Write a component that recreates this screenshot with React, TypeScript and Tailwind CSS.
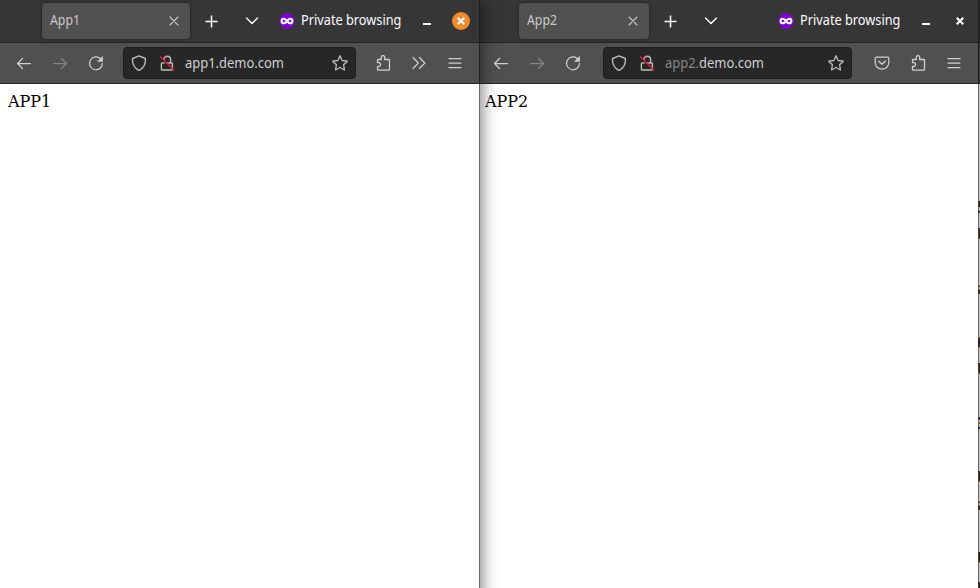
import type { ReactNode } from 'react'
import clsx from 'clsx'

interface BrowserWindow {
  title: string
  subdomain: string
  body: string
  active: boolean
}

const EDGE_TEXT = [
  { top: 197, char: '5' },
  { top: 224, char: 'U' },
  { top: 278, char: 'a' },
  { top: 332, char: '6' },
  { top: 359, char: 'U' },
  { top: 413, char: '3' },
  { top: 467, char: 'U' },
  { top: 494, char: 'a' },
  { top: 548, char: 'U' },
  { top: 575, char: 'r' },
]

function Icon({ children, className }: { children: ReactNode; className?: string }) {
  return (
    <svg width="16" height="16" viewBox="0 0 16 16" fill="none" stroke="currentColor" strokeWidth="1.25"
      strokeLinecap="round" strokeLinejoin="round" className={clsx('block shrink-0', className)}>
      {children}
    </svg>
  )
}

const BackIcon = () => <Icon><path d="M14.5 8.5H1.5M6.5 3.5l-5 5 5 5" /></Icon>
const ForwardIcon = () => <Icon className="text-[#858585]"><path d="M1.5 8.5h13M9.5 3.5l5 5-5 5" /></Icon>

const ReloadIcon = () => (
  <Icon>
    <path d="M12.7 4A6.4 6.4 0 1 0 14.4 8.5" />
    <path d="M14.6 1.6v4.8H9.8z" fill="currentColor" strokeWidth="0.6" />
  </Icon>
)

const ShieldIcon = () => (
  <Icon><path d="M8 .9 14.4 3.5c.5 5.4-1.5 9.5-6.4 12C3.1 13 1.1 8.9 1.6 3.5z" strokeWidth="1.4" /></Icon>
)

const LockIcon = () => (
  <Icon>
    <path d="M5 4.5a3.3 3.3 0 0 1 6.6 0V8M5 8H3.2a.8.8 0 0 0-.8.8v5.4c0 .5.3.8.8.8h9.4c.5 0 .8-.3.8-.8V8.8a.8.8 0 0 0-.8-.8H7.5" strokeWidth="1.4" />
    <path d="M1.5 1.8 14.5 14.8" stroke="#e5194b" strokeWidth="1.4" />
  </Icon>
)

const StarIcon = () => (
  <Icon><path d="m8 .8 2.2 4.7 5.1.7-3.7 3.6.9 5.2L8 12.5 3.5 15l.9-5.2L.7 6.2l5.1-.7z" strokeWidth="1.3" /></Icon>
)

const PuzzleIcon = () => (
  <Icon>
    <path d="M2.5 7.2V5.3c0-.5.3-.8.8-.8h3V2.3a1.7 1.7 0 0 1 3.4 0v2.2h4c.5 0 .8.3.8.8v9.2c0 .4-.3.7-.7.7H3.2a.7.7 0 0 1-.7-.7v-3h1.700a2 2 0 0 0 0-3.800H2.500z" strokeWidth="1.3" />
  </Icon>
)

const PocketIcon = () => (
  <Icon>
    <path d="M2.4 2.2h11.2c.7 0 1.2.5 1.2 1.2v4c0 3.9-2.9 6.7-6.8 6.7S1.2 11.3 1.2 7.4v-4c0-.7.5-1.2 1.2-1.2z" />
    <path d="M4.7 6.2 8 9.3l3.3-3.1" strokeWidth="1.4" />
  </Icon>
)

const OverflowIcon = () => <Icon><path d="m2 2.5 5.3 5.5L2 13.5M8.5 2.5 13.8 8l-5.3 5.5" /></Icon>
const MenuIcon = () => <Icon><path d="M2 3.5h12M2 8h12M2 12.5h12" /></Icon>

function PrivateMask() {
  return (
    <svg width="16" height="16" viewBox="0 0 16 16" className="block shrink-0">
      <circle cx="8" cy="8" r="7.7" fill="#8000d7" />
      <path d="M8 8C6.700 6.300 5.900 5.700 4.900 5.700a2.300 2.300 0 0 0 0 4.600C5.900 10.300 6.700 9.700 8 8s2.100-2.300 3.100-2.300a2.300 2.300 0 0 1 0 4.600C10.100 10.300 9.300 9.700 8 8z"
        fill="none" stroke="#fff" strokeWidth="2.100" strokeLinejoin="round" />
    </svg>
  )
}

function ToolButton({ children }: { children: ReactNode }) {
  return <button className="flex h-8 w-9 shrink-0 items-center justify-center">{children}</button>
}

function TitleBar({ win }: { win: BrowserWindow }) {
  return (
    <div className="flex h-[43px] shrink-0 items-start border-b border-[#232323] bg-[#363636] pt-[3px] pl-[42px] text-[#fbfbfe]">
      <div className={clsx('flex h-9 shrink-0 items-center justify-between rounded bg-[#505050] px-2 text-[#c9c9c9] shadow-[0_0_3px_rgba(0,0,0,0.45)]',
        win.active ? 'w-[148px]' : 'w-[130px]')}>
        <span className="mb-[2px] origin-left scale-x-[0.88] text-[14px] leading-none">{win.title}</span>
        <Icon><path d="m4 4 8 8M12 4l-8 8" strokeWidth="1.1" /></Icon>
      </div>
      <button className="ml-[14px] flex h-9 w-4 shrink-0 items-center">
        <Icon><path d="M7.5 2.5v12M1.5 8.5h12" strokeWidth="1.5" strokeLinecap="butt" /></Icon>
      </button>
      <button className="ml-6 flex h-9 w-4 shrink-0 items-center">
        <Icon><path d="m2.5 5 5.5 5.5L13.5 5" strokeWidth="1.4" /></Icon>
      </button>
      <div className={clsx('flex h-9 shrink-0 items-center', win.active ? 'ml-[19px]' : 'ml-[59px]')}>
        <PrivateMask />
        <span className="mb-[2px] ml-[6px] w-[100px] origin-left scale-x-[0.91] text-[14px] leading-none whitespace-nowrap">Private browsing</span>
      </div>
      <button className="ml-[22px] flex h-9 w-2 shrink-0 items-center">
        <span className="mt-[6px] h-[2px] w-2 bg-white" />
      </button>
      <button className={clsx('mt-[9px] ml-[21px] flex size-[18px] shrink-0 items-center justify-center rounded-full',
        win.active && 'bg-[#f28b2b]')}>
        <svg width="8" height="8" viewBox="0 0 8 8" stroke="#fff" strokeWidth="2"><path d="m.7.7 6.6 6.6M7.3.7.7 7.3" /></svg>
      </button>
    </div>
  )
}

function NavBar({ win }: { win: BrowserWindow }) {
  return (
    <div className="flex h-[41px] shrink-0 items-center border-b border-[#282828] bg-[#505050] px-[6px] text-[#cfcfcf]">
      <ToolButton><BackIcon /></ToolButton>
      <ToolButton><ForwardIcon /></ToolButton>
      <ToolButton><ReloadIcon /></ToolButton>
      <div className={clsx('flex h-8 flex-1 items-center rounded border border-[#1e1e1e] bg-[#272727] px-[7px] text-[#bcbcbc]',
        win.active ? 'mx-[9px]' : 'mx-3')}>
        <ShieldIcon />
        <span className="ml-3"><LockIcon /></span>
        <span className="ml-[10px] flex-1 origin-left scale-x-[0.925] text-[14px] leading-none whitespace-nowrap">
          <span className={win.active ? 'text-[#cfcfcf]' : 'text-[#858585]'}>{win.subdomain}.</span>
          <span className="text-[#cfcfcf]">demo.com</span>
        </span>
        <StarIcon />
      </div>
      {!win.active && <ToolButton><PocketIcon /></ToolButton>}
      <ToolButton><PuzzleIcon /></ToolButton>
      {win.active && <ToolButton><OverflowIcon /></ToolButton>}
      <ToolButton><MenuIcon /></ToolButton>
    </div>
  )
}

function Browser({ win }: { win: BrowserWindow }) {
  return (
    <section className={clsx('relative -mb-10 flex shrink-0 flex-col border-r border-[#686868] bg-white',
      win.active
        ? 'z-20 w-[480px] shadow-[1px_0_16px_rgba(0,0,0,0.55)]'
        : 'z-10 -ml-[3px] w-[502px] shadow-[1px_0_10px_rgba(0,0,0,0.4)]')}>
      <TitleBar win={win} />
      <NavBar win={win} />
      <main className="px-2 pt-2 font-['DejaVu_Serif',serif] text-[16px] leading-[19px] text-black">{win.body}</main>
      <div className="absolute top-0 -right-px h-[84px] w-px bg-[#1f1f1f]" />
    </section>
  )
}

export default function App() {
  return (
    <div className="relative flex h-[588px] w-[980px] overflow-hidden bg-white font-['Noto_Sans',sans-serif]">
      <Browser win={{ title: 'App1', subdomain: 'app1', body: 'APP1', active: true }} />
      <Browser win={{ title: 'App2', subdomain: 'app2', body: 'APP2', active: false }} />
      <div className="relative flex-1 bg-white">
        <div className="h-[43px] bg-[#303030]" />
        <div className="h-[41px] bg-[#464646]" />
      </div>
      {/* page text peeking out behind the right-hand window */}
      <div className="absolute top-0 right-0 z-30 h-full w-[2px] overflow-hidden text-[16px] leading-5 font-bold text-[#222]">
        {EDGE_TEXT.map(({ top, char }) => (
          <span key={top} className="absolute -left-px" style={{ top }}>{char}</span>
        ))}
      </div>
    </div>
  )
}
